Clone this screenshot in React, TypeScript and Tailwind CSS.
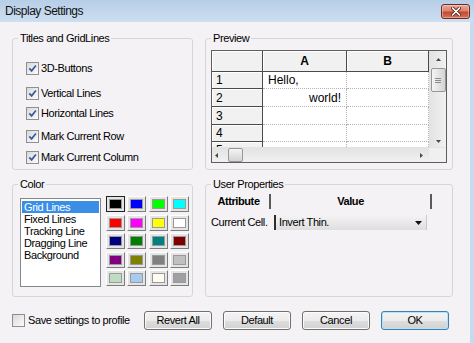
import React from "react";

const swatches = [
  "bg-[#000000]", "bg-[#0000ff]", "bg-[#00ff00]", "bg-[#00ffff]",
  "bg-[#ff0000]", "bg-[#ff00ff]", "bg-[#ffff00]", "bg-[#ffffff]",
  "bg-[#000080]", "bg-[#008000]", "bg-[#008080]", "bg-[#800000]",
  "bg-[#800080]", "bg-[#808000]", "bg-[#808080]", "bg-[#c0c0c0]",
  "bg-[#c0dcc0]", "bg-[#a6caf0]", "bg-[#fffbf0]", "bg-[#a0a0a4]",
];

const colorItems = ["Grid Lines", "Fixed Lines", "Tracking Line", "Dragging Line", "Background"];

const rows = [
  { n: "1", h: "h-[17px]", text: "Hello,", right: false },
  { n: "2", h: "h-[18px]", text: "world!", right: true },
  { n: "3", h: "h-[18px]", text: "", right: false },
  { n: "4", h: "h-[17px]", text: "", right: false },
  { n: "5", h: "h-[17px]", text: "", right: false },
];

function CheckBox({ checked }: { checked?: boolean }) {
  return (
    <span className="flex h-[13px] w-[13px] shrink-0 items-center justify-center border border-[#8e8f8f] bg-white">
      <span className="flex h-[11px] w-[11px] items-center justify-center bg-gradient-to-br from-[#d8d8d8] via-[#ebebeb] to-[#fbfbfb]">
        {checked && (
          <svg width="9" height="9" viewBox="0 0 9 9">
            <path d="M1.3 4.4 L3.6 6.9 L7.9 1.5" fill="none" stroke="#3d5a9e" strokeWidth="1.7" />
          </svg>
        )}
      </span>
    </span>
  );
}

function CheckRow({ label, className }: { label: string; className?: string }) {
  return (
    <div className={`flex h-[13px] items-center ${className ?? ""}`}>
      <CheckBox checked />
      <span className="ml-[2px] whitespace-nowrap">{label}</span>
    </div>
  );
}

function Tri({ dir }: { dir: "up" | "down" | "left" | "right" }) {
  if (dir === "up")
    return <svg width="5" height="3" viewBox="0 0 5 3"><path d="M0 3 L2.5 0 L5 3Z" fill="#4a4a4a" /></svg>;
  if (dir === "down")
    return <svg width="5" height="3" viewBox="0 0 5 3"><path d="M0 0 L5 0 L2.5 3Z" fill="#4a4a4a" /></svg>;
  if (dir === "left")
    return <svg width="3" height="5" viewBox="0 0 3 5"><path d="M3 0 L3 5 L0 2.5Z" fill="#4a4a4a" /></svg>;
  return <svg width="3" height="5" viewBox="0 0 3 5"><path d="M0 0 L3 2.5 L0 5Z" fill="#4a4a4a" /></svg>;
}

function Btn({ label, primary }: { label: string; primary?: boolean }) {
  return (
    <div
      className={`flex h-[19px] w-[68px] items-center justify-center rounded-[3px] border bg-[linear-gradient(#f4f4f4_0%,#ececec_50%,#dedede_52%,#d2d2d2_100%)] ${
        primary
          ? "border-[#3c7fb1] shadow-[inset_0_0_0_1px_#b6e3f8]"
          : "border-[#707070] shadow-[inset_0_0_0_1px_#fbfbfb]"
      }`}
    >
      {label}
    </div>
  );
}

function PreviewGrid() {
  return (
    <div className="ml-[5px] mt-[5px] flex h-[113px] w-[236px] flex-col border border-[#5e5e5e] bg-white text-[12px] tracking-normal">
      <div className="flex h-[96px]">
        <div className="flex w-[217px] flex-col overflow-hidden">
          <div className="flex h-[21px] shrink-0 font-bold">
            <div className="w-[51px] border-b border-r border-[#4a4a4a] bg-[#f1f1f1] shadow-[inset_1px_1px_0_#ffffff]" />
            <div className="flex w-[84px] items-center justify-center border-b border-r border-[#4a4a4a] bg-[#f1f1f1] shadow-[inset_1px_1px_0_#ffffff]">A</div>
            <div className="flex w-[82px] items-center justify-center border-b border-r border-[#4a4a4a] bg-[#f1f1f1] shadow-[inset_1px_1px_0_#ffffff]">B</div>
          </div>
          {rows.map((r) => (
            <div key={r.n} className={`flex shrink-0 ${r.h}`}>
              <div className="flex w-[51px] items-center border-b border-r border-[#4a4a4a] bg-[#f1f1f1] pl-[4px] shadow-[inset_1px_1px_0_#ffffff]">
                {r.n}
              </div>
              <div
                className={`flex w-[84px] items-center border-b border-r border-dotted border-[#b4b4b4] ${
                  r.right ? "justify-end pr-[5px]" : "pl-[5px]"
                }`}
              >
                {r.text}
              </div>
              <div className="w-[82px] border-b border-r border-dotted border-[#b4b4b4]" />
            </div>
          ))}
        </div>
        <div className="flex w-[17px] flex-col border-l border-[#e2e2e2] bg-[linear-gradient(90deg,#e3e3e3,#f1f1f1)]">
          <div className="flex h-[17px] items-center justify-center">
            <Tri dir="up" />
          </div>
          <div className="mx-auto flex h-[24px] w-[15px] flex-col items-center justify-center gap-[1px] rounded-[2px] border border-[#979797] bg-[linear-gradient(90deg,#f4f4f4,#e4e4e4_50%,#d4d4d4)]">
            <span className="h-px w-[6px] bg-[#8c8c8c]" />
            <span className="h-px w-[6px] bg-[#8c8c8c]" />
            <span className="h-px w-[6px] bg-[#8c8c8c]" />
          </div>
          <div className="flex flex-1 items-end justify-center pb-[4px]">
            <Tri dir="down" />
          </div>
        </div>
      </div>
      <div className="flex h-[16px] border-t border-[#e2e2e2]">
        <div className="flex w-[217px] items-center bg-[linear-gradient(#e3e3e3,#f1f1f1)]">
          <div className="flex w-[16px] items-center pl-[3px]">
            <Tri dir="left" />
          </div>
          <div className="h-[14px] w-[15px] rounded-[2px] border border-[#979797] bg-[linear-gradient(#f4f4f4,#e4e4e4_50%,#d4d4d4)]" />
          <div className="flex flex-1 items-center justify-end pr-[6px]">
            <Tri dir="right" />
          </div>
        </div>
        <div className="flex-1 bg-[#f0f0f0]" />
      </div>
    </div>
  );
}

export default function App() {
  return (
    <div className="flex h-[343px] w-[474px] flex-col overflow-hidden bg-[#c6dbef] font-['Liberation_Sans',Arial,sans-serif] text-[11px] tracking-[-0.4px] text-black">
      {/* title bar */}
      <div className="flex h-[22px] shrink-0 items-center justify-between bg-[linear-gradient(#b7cee7,#cddff1)] pl-[5px] pr-[4px]">
        <span className="text-[12px] tracking-[-0.5px] text-[#111]">Display Settings</span>
        <div className="flex h-[15px] w-[29px] items-center justify-center rounded-[3px] border border-[#6b2b24] bg-[linear-gradient(#e9a797_0%,#d9846f_45%,#c4482f_55%,#d3735a_100%)] shadow-[inset_0_0_0_1px_rgba(255,255,255,0.35)]">
          <svg width="10" height="9" viewBox="0 0 10 9">
            <path d="M1.5 1 L8.5 8 M8.5 1 L1.5 8" stroke="#5a1d14" strokeWidth="3.2" strokeLinecap="round" />
            <path d="M1.5 1 L8.5 8 M8.5 1 L1.5 8" stroke="#ffffff" strokeWidth="1.7" strokeLinecap="round" />
          </svg>
        </div>
      </div>

      <div className="mr-[4px] flex flex-1 flex-col bg-[#f4f2f5] pl-[12px] pr-[17px] pt-[10px]">
        <div className="flex gap-[12px]">
          <fieldset className="h-[138px] w-[181px] min-w-0 rounded-[3px] border border-[#d3d7db]">
            <legend className="ml-[5px] px-[2px] leading-[13px]">Titles and GridLines</legend>
            <div className="ml-[13px] flex flex-col">
              <CheckRow label="3D-Buttons" className="mt-[17px]" />
              <CheckRow label="Vertical Lines" className="mt-[12px]" />
              <CheckRow label="Horizontal Lines" className="mt-[7px]" />
              <CheckRow label="Mark Current Row" className="mt-[10px]" />
              <CheckRow label="Mark Current Column" className="mt-[8px]" />
            </div>
          </fieldset>

          <fieldset className="h-[138px] w-[248px] min-w-0 rounded-[3px] border border-[#d3d7db]">
            <legend className="ml-[5px] px-[2px] leading-[13px]">Preview</legend>
            <PreviewGrid />
          </fieldset>
        </div>

        <div className="mt-[8px] flex gap-[12px]">
          <fieldset className="h-[119px] w-[181px] min-w-0 rounded-[3px] border border-[#d3d7db]">
            <legend className="ml-[5px] px-[2px] leading-[13px]">Color</legend>
            <div className="mt-[5px] flex items-start pl-[7px]">
              <div className="mt-[2px] h-[89px] w-[81px] border border-[#828790] bg-white px-[1px] pt-[2px]">
                {colorItems.map((c, i) => (
                  <div
                    key={c}
                    className={`h-[12px] whitespace-nowrap pl-[2px] leading-[12px] ${i === 0 ? "bg-[#3a8ee6] text-white" : ""}`}
                  >
                    {c}
                  </div>
                ))}
              </div>
              <div className="ml-[5px] grid grid-cols-[repeat(4,19px)] gap-x-[2.4px] gap-y-[2.6px]">
                {swatches.map((s, i) => (
                  <div
                    key={i}
                    className={`h-[16px] w-[19px] bg-[#e4e4e4] p-[2px] ${
                      i === 0
                        ? "border border-[#222222]"
                        : "border border-b-[#7d7d7d] border-l-white border-r-[#7d7d7d] border-t-white"
                    }`}
                  >
                    <div className={`h-full w-full border border-[#9a9a9a] ${s}`} />
                  </div>
                ))}
              </div>
            </div>
          </fieldset>

          <fieldset className="h-[119px] w-[248px] min-w-0 rounded-[3px] border border-[#d3d7db]">
            <legend className="ml-[5px] px-[2px] leading-[13px]">User Properties</legend>
            <div className="ml-[2px] mt-[3px] flex h-[15px] font-bold">
              <div className="flex w-[63px] items-center justify-center border-r-2 border-[#5a5a5a]">Attribute</div>
              <div className="flex w-[161px] items-center justify-center border-r-2 border-[#5a5a5a]">Value</div>
            </div>
            <div className="ml-[2px] mt-[6px] flex h-[15px] items-center">
              <div className="w-[63px] whitespace-nowrap pl-[3px]">Current Cell.</div>
              <div className="ml-[3px] flex h-[15px] w-[153px] items-center justify-between border-l-2 border-r border-l-[#2e2e2e] border-r-[#c9c9c9] bg-[linear-gradient(#f4f4f4,#dedede)] pl-[3px] pr-[4px]">
                <span>Invert Thin.</span>
                <svg width="7" height="4" viewBox="0 0 7 4">
                  <path d="M0 0 L7 0 L3.5 4Z" fill="#111111" />
                </svg>
              </div>
            </div>
          </fieldset>
        </div>

        <div className="mt-[14px] flex h-[19px] items-center">
          <CheckBox />
          <span className="ml-[3px]">Save settings to profile</span>
          <div className="ml-auto mr-[4px] flex gap-[11px]">
            <Btn label="Revert All" />
            <Btn label="Default" />
            <Btn label="Cancel" />
            <Btn label="OK" primary />
          </div>
        </div>
      </div>
    </div>
  );
}
